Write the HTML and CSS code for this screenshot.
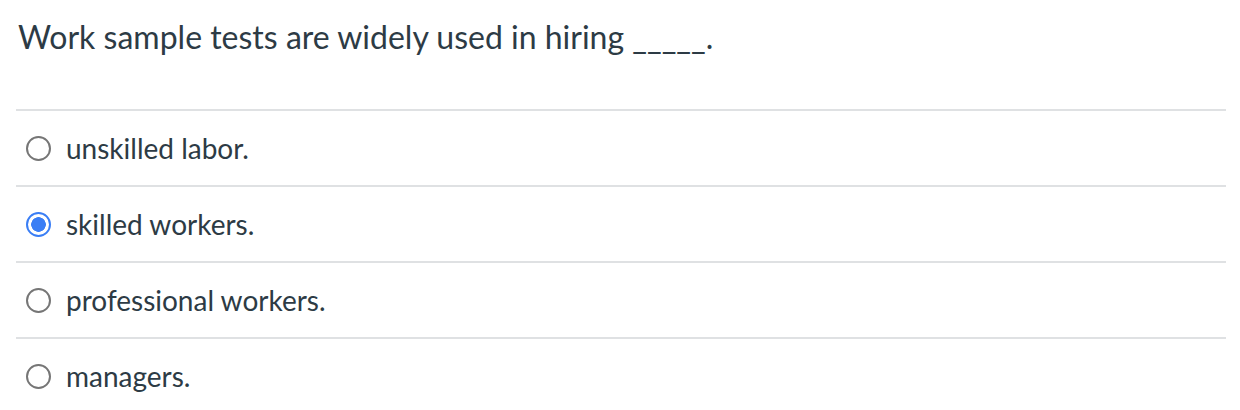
FILE: index.html
```html
<!DOCTYPE html>
<html>
<head>
<meta charset="utf-8">
<link rel="stylesheet" href="styles.css">
</head>
<body>
<div class="question">
  <div class="question-text">Work sample tests are widely used in hiring _____.</div>
  <ul class="answers">
    <li class="answer"><span class="radio"></span><span class="label">unskilled labor.</span></li>
    <li class="answer"><span class="radio checked"></span><span class="label">skilled workers.</span></li>
    <li class="answer"><span class="radio"></span><span class="label">professional workers.</span></li>
    <li class="answer"><span class="radio"></span><span class="label">managers.</span></li>
  </ul>
</div>
</body>
</html>
```
FILE: styles.css
```css
html, body {
  margin: 0;
  padding: 0;
  background: #fff;
}
body {
  font-family: Lato, "Open Sans", sans-serif;
  color: #2d3b45;
}
.question {
  padding: 0 14px 0 16px;
}
.question-text {
  font-size: 32px;
  line-height: 40px;
  padding: 17px 0 0 2px;
  height: 109px;
  box-sizing: border-box;
}
.answers {
  list-style: none;
  margin: 0;
  padding: 0;
}
.answer {
  border-top: 2px solid #dfe1e3;
  height: 74px;
  display: flex;
  align-items: center;
  font-size: 28px;
  padding-left: 10px;
}
.radio {
  width: 25px;
  height: 25px;
  box-sizing: border-box;
  border: 2px solid #767676;
  border-radius: 50%;
  margin-right: 15px;
  flex: none;
  background: #fff;
}
.radio.checked {
  border-color: #3a7ef5;
  background: radial-gradient(circle, #3a7ef5 0 7px, #fff 7.6px);
}
```
